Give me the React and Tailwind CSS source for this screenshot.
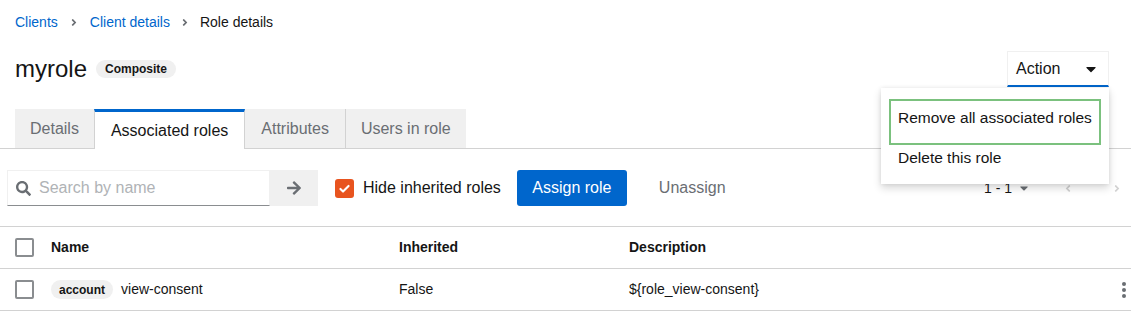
import React from 'react';

const font = { fontFamily: '"Liberation Sans", Arial, sans-serif' };

const Chevron = ({ className = '' }) => (
  <svg viewBox="0 0 256 512" className={className} fill="currentColor">
    <path d="M224.3 273l-136 136c-9.4 9.4-24.6 9.4-33.9 0l-22.6-22.6c-9.4-9.4-9.4-24.6 0-33.9l96.4-96.4-96.4-96.4c-9.4-9.4-9.4-24.6 0-33.9L54.3 103c9.4-9.4 24.6-9.4 33.9 0l136 136c9.5 9.4 9.5 24.6.1 34z" />
  </svg>
);

const Caret = ({ className = '' }) => (
  <svg viewBox="0 0 320 512" className={className} fill="currentColor">
    <path d="M31.3 192h257.3c17.8 0 26.7 21.5 14.1 34.1L174.1 354.8c-7.8 7.8-20.5 7.8-28.3 0L17.2 226.1C4.6 213.5 13.5 192 31.3 192z" />
  </svg>
);

const Checkbox = () => (
  <span className="block w-[19px] h-[19px] rounded-[2px] border-2 border-[#8a8d90] bg-white" />
);

const Breadcrumb = () => (
  <nav className="flex items-center text-[14px] leading-[21px] pt-[12px] px-[15px]">
    <span className="text-[#0066cc]">Clients</span>
    <Chevron className="w-[6px] h-[11px] mx-[13px] text-[#6a6e73]" />
    <span className="text-[#0066cc]">Client details</span>
    <Chevron className="w-[6px] h-[11px] mx-[12px] text-[#6a6e73]" />
    <span className="text-[#151515]">Role details</span>
  </nav>
);

const ActionMenu = () => (
  <div className="relative">
    <button className="flex items-center w-[102px] h-[36px] pl-[8px] pr-[12px] border border-[#f0f0f0] border-b-2 border-b-[#0066cc] text-[16px] text-[#151515]">
      <span>Action</span>
      <Caret className="w-[10px] h-[16px] ml-auto" />
    </button>
    <div className="absolute right-0 top-[37px] w-[228px] bg-white shadow-[0_4px_8px_rgba(3,3,3,0.16),0_0_4px_rgba(3,3,3,0.08)] py-[11px] px-[8px] z-10">
      <div className="border-2 border-[#7bc17e] h-[46px] pl-[7px] pt-[5px] text-[15.5px] text-[#151515] whitespace-nowrap">
        Remove all associated roles
      </div>
      <div className="pl-[9px] pt-[1px] h-[28px] text-[15.5px] text-[#151515] whitespace-nowrap">Delete this role</div>
    </div>
  </div>
);

const Tabs = () => (
  <div className="flex border-b border-[#d2d2d2] px-[15px] mt-[22px] text-[16px]">
    <div className="h-[39px] px-[15px] flex items-center bg-[#f0f0f0] text-[#6a6e73]">Details</div>
    <div className="h-[40px] px-[16px] flex items-center bg-white border-t-[3px] border-t-[#0066cc] border-x border-x-[#d2d2d2] text-[#151515] -mb-px">
      Associated roles
    </div>
    <div className="h-[39px] px-[16px] flex items-center bg-[#f0f0f0] border-r border-r-[#d2d2d2] text-[#6a6e73]">Attributes</div>
    <div className="h-[39px] px-[15px] flex items-center bg-[#f0f0f0] text-[#6a6e73]">Users in role</div>
  </div>
);

const Toolbar = () => (
  <div className="flex items-center h-[36px] mt-[21px] pl-[7px] pr-[11px]">
    <div className="flex items-center w-[263px] h-[36px] border border-[#f0f0f0] border-b-[#8a8d90] bg-white pl-[8px]">
      <svg viewBox="0 0 512 512" className="w-[15px] h-[15px] text-[#6a6e73]" fill="currentColor">
        <path d="M505 442.7L405.3 343c-4.5-4.5-10.6-7-17-7H372c27.6-35.3 44-79.7 44-128C416 93.1 322.9 0 208 0S0 93.1 0 208s93.1 208 208 208c48.3 0 92.7-16.4 128-44v16.3c0 6.4 2.5 12.5 7 17l99.7 99.7c9.4 9.4 24.6 9.4 33.9 0l28.3-28.3c9.4-9.4 9.4-24.6.1-34zM208 336c-70.7 0-128-57.2-128-128 0-70.7 57.2-128 128-128 70.7 0 128 57.2 128 128 0 70.7-57.2 128-128 128z" />
      </svg>
      <span className="ml-[8px] text-[16px] text-[#b0b3b6]">Search by name</span>
    </div>
    <div className="w-[48px] h-[36px] bg-[#f0f0f0] flex items-center justify-center">
      <svg viewBox="0 0 448 512" className="w-[14px] h-[16px] text-[#6a6e73]" fill="currentColor">
        <path d="M190.5 66.9l22.2-22.2c9.4-9.4 24.6-9.4 33.9 0L441 239c9.4 9.4 9.4 24.6 0 33.9L246.6 467.3c-9.4 9.4-24.6 9.4-33.9 0l-22.2-22.2c-9.5-9.5-9.3-25 .4-34.3L311.4 296H24c-13.3 0-24-10.7-24-24v-32c0-13.3 10.7-24 24-24h287.4L190.9 101.2c-9.8-9.3-10-24.8-.4-34.3z" />
      </svg>
    </div>
    <div className="flex items-center ml-[17px]">
      <span className="w-[19px] h-[19px] rounded-[3px] bg-[#e8541f] flex items-center justify-center">
        <svg viewBox="0 0 16 16" className="w-[13px] h-[13px]" fill="none" stroke="white" strokeWidth="2.6" strokeLinecap="round" strokeLinejoin="round">
          <path d="M3 8.5l3.2 3.2L13 4.8" />
        </svg>
      </span>
      <span className="ml-[9px] text-[16px] text-[#151515]">Hide inherited roles</span>
    </div>
    <button className="ml-[16px] w-[110px] h-[36px] rounded-[3px] bg-[#0066cc] text-white text-[16px]">Assign role</button>
    <span className="ml-[32px] text-[16px] text-[#6a6e73]">Unassign</span>
    <div className="ml-auto flex items-center">
      <span className="text-[14px] text-[#151515]">1 - 1</span>
      <Caret className="ml-[8px] w-[8px] h-[14px] text-[#6a6e73]" />
      <Chevron className="ml-[37px] w-[6px] h-[11px] text-[#d2d2d2] rotate-180" />
      <Chevron className="ml-[43px] w-[6px] h-[11px] text-[#d2d2d2]" />
    </div>
  </div>
);

const Table = () => (
  <div className="mt-[20px] border-t border-[#d2d2d2]">
    <div className="flex items-center h-[42px] border-b border-[#d2d2d2] text-[14px] font-semibold text-[#151515]">
      <div className="w-[51px] pl-[15px]"><Checkbox /></div>
      <div className="w-[348px]">Name</div>
      <div className="w-[230px]">Inherited</div>
      <div>Description</div>
    </div>
    <div className="flex items-center h-[42px] border-b border-[#d2d2d2] text-[14px] text-[#151515]">
      <div className="w-[51px] pl-[15px]"><Checkbox /></div>
      <div className="w-[348px] flex items-center">
        <span className="h-[19px] px-[8px] rounded-full bg-[#f0f0f0] text-[12px] font-semibold flex items-center">account</span>
        <span className="ml-[8px]">view-consent</span>
      </div>
      <div className="w-[230px]">False</div>
      <div>{'${role_view-consent}'}</div>
      <svg viewBox="0 0 4 16" className="ml-auto mr-[5px] w-[4px] h-[16px] text-[#6a6e73]" fill="currentColor">
        <circle cx="2" cy="2" r="2" />
        <circle cx="2" cy="8" r="2" />
        <circle cx="2" cy="14" r="2" />
      </svg>
    </div>
  </div>
);

export default function App() {
  return (
    <div className="w-[1131px] h-[328px] bg-white overflow-hidden" style={font}>
      <Breadcrumb />
      <div className="flex items-center justify-between pr-[22px] pl-[15px] mt-[18px]">
        <div className="flex items-center">
          <h1 className="text-[24px] leading-[30px] text-[#151515]">myrole</h1>
          <span className="ml-[9px] h-[18px] px-[9px] rounded-full bg-[#f0f0f0] text-[12px] font-semibold text-[#151515] flex items-center">Composite</span>
        </div>
        <ActionMenu />
      </div>
      <Tabs />
      <Toolbar />
      <Table />
    </div>
  );
}
